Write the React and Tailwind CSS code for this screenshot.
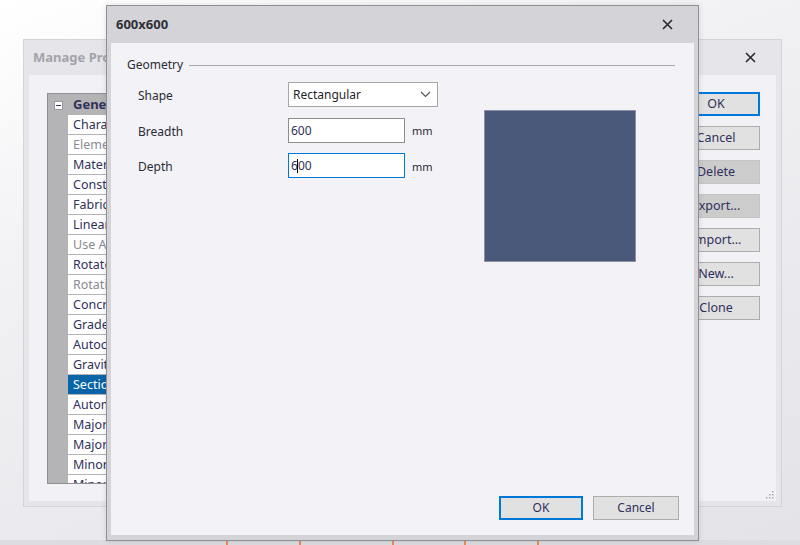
import React from "react";

const treeRows = [
  { t: "Characteristics" },
  { t: "Element Type", g: true },
  { t: "Material" },
  { t: "Construction" },
  { t: "Fabrication" },
  { t: "Linear" },
  { t: "Use Analysis", g: true },
  { t: "Rotate" },
  { t: "Rotation", g: true },
  { t: "Concrete" },
  { t: "Grade" },
  { t: "Autocalc" },
  { t: "Gravity" },
  { t: "Section", sel: true },
  { t: "Automatic" },
  { t: "Major" },
  { t: "Major" },
  { t: "Minor" },
  { t: "Minor" },
];

const sideButtons = [
  { t: "OK", focus: true },
  { t: "Cancel" },
  { t: "Delete", dis: true },
  { t: "Export...", dis: true },
  { t: "Import..." },
  { t: "New..." },
  { t: "Clone" },
];

function CloseX({ className = "" }) {
  return (
    <svg width="11" height="11" viewBox="0 0 11 11" className={className}>
      <path d="M1 1 L10 10 M10 1 L1 10" stroke="#2a2a2a" strokeWidth="1.6" />
    </svg>
  );
}

export default function App() {
  return (
    <div
      className="relative w-[800px] h-[545px] overflow-hidden bg-[linear-gradient(160deg,#ffffff_0%,#f1f1f4_35%,#e3e3e8_100%)] text-[12px] text-[#2b2b33]"
      style={{ fontFamily: '"Noto Sans", "Open Sans", Arial, sans-serif' }}
    >
      {/* bottom strip with ticks */}
      <div className="absolute left-0 right-0 top-[540px] h-[5px] bg-[#dcdce1]">
        <div className="absolute left-[226px] top-0 w-[2px] h-[5px] bg-[#f08a5d]" />
        <div className="absolute left-[299px] top-0 w-[2px] h-[5px] bg-[#f08a5d]" />
        <div className="absolute left-[392px] top-0 w-[2px] h-[5px] bg-[#f08a5d]" />
        <div className="absolute left-[464px] top-0 w-[2px] h-[5px] bg-[#f08a5d]" />
        <div className="absolute left-[537px] top-0 w-[2px] h-[5px] bg-[#f08a5d]" />
      </div>

      {/* background dialog */}
      <div className="absolute left-[23px] top-[39px] w-[759px] h-[468px] bg-[#e6e6ea] border border-[#d3d3d8] flex flex-col">
        <div className="h-[35px] flex items-center justify-between pl-[9px] pr-[25px] shrink-0">
          <span className="font-bold text-[13px] text-[#a3a3ab]">Manage Properties</span>
          <CloseX />
        </div>
        <div className="flex-1 mx-[5px] mb-[5px] bg-[#f2f2f6] flex justify-between pl-[18px] pr-[16px] pt-[17px] relative">
          {/* tree */}
          <div className="w-[300px] h-[391px] mt-[1px] border border-[#8e8e93] bg-[#b4b4b6] overflow-hidden flex flex-col">
            <div className="h-[21px] flex items-center shrink-0 pt-[1px]">
              <div className="w-[20px] flex justify-center">
                <div className="w-[9px] h-[9px] bg-white border border-[#9a9aa0] flex items-center justify-center">
                  <div className="w-[5px] h-[1px] bg-[#3a3a60]" />
                </div>
              </div>
              <span className="font-bold text-[13px] text-[#30305a] pl-[5px]">General</span>
            </div>
            {treeRows.map((r, i) => (
              <div
                key={i}
                className={`ml-[20px] h-[19px] mb-[1px] shrink-0 flex items-center pl-[5px] pt-[2px] text-[12.5px] ${
                  r.sel ? "bg-[#0a64a8] text-white" : r.g ? "bg-white text-[#8a8a92]" : "bg-white text-[#30305a]"
                }`}
              >
                {r.t}
              </div>
            ))}
          </div>
          {/* buttons */}
          <div className="flex flex-col gap-[10px] w-[88px]">
            {sideButtons.map((b, i) => (
              <div
                key={i}
                className={`h-[24px] flex items-center justify-center pt-[1px] text-[12.5px] text-[#30305a] ${
                  b.focus
                    ? "bg-[#e1e1e1] border-2 border-[#0078d7]"
                    : b.dis
                    ? "bg-[#cccccc] border border-[#c4c4c4]"
                    : "bg-[#e1e1e1] border border-[#adadad]"
                }`}
              >
                {b.t}
              </div>
            ))}
          </div>
          {/* resize grip */}
          <svg width="9" height="9" viewBox="0 0 9 9" className="absolute right-[2px] bottom-[2px]">
            <rect x="7" y="1" width="1.5" height="1.5" fill="#a8a8ae" />
            <rect x="4" y="4" width="1.5" height="1.5" fill="#a8a8ae" />
            <rect x="7" y="4" width="1.5" height="1.5" fill="#a8a8ae" />
            <rect x="1" y="7" width="1.5" height="1.5" fill="#a8a8ae" />
            <rect x="4" y="7" width="1.5" height="1.5" fill="#a8a8ae" />
            <rect x="7" y="7" width="1.5" height="1.5" fill="#a8a8ae" />
          </svg>
        </div>
      </div>

      {/* front dialog */}
      <div className="absolute left-[106px] top-[5px] w-[593px] h-[536px] bg-[#d3d3d8] border border-[#8f8f96] flex flex-col shadow-[0_0_6px_rgba(0,0,0,0.12)]">
        <div className="h-[37px] shrink-0 flex items-center justify-between pl-[9px] pr-[25px]">
          <span className="font-bold text-[13px] text-[#2f2f38]">600x600</span>
          <CloseX />
        </div>
        <div className="flex-1 mx-[4px] mb-[5px] bg-[#f2f2f7] flex flex-col pt-[14px] pl-[16px] pr-[15px] pb-[15px]">
          {/* group header */}
          <div className="flex items-center h-[16px]">
            <span className="text-[12px] text-[#2b2b33]">Geometry</span>
            <div className="flex-1 h-[1px] bg-[#a8a8ae] ml-[6px] mr-[4px]" />
          </div>
          <div className="flex pl-[11px] mt-[9px]">
            <div className="w-[346px] flex flex-col">
              <div className="flex items-center h-[25px]">
                <span className="w-[150px] pt-[3px]">Shape</span>
                <div className="w-[150px] h-[25px] bg-white border border-[#a6a6a6] flex items-center justify-between pl-[4px] pr-[6px]">
                  <span className="text-[#1f1f2a]">Rectangular</span>
                  <svg width="11" height="7" viewBox="0 0 11 7">
                    <path d="M1 1 L5.5 5.5 L10 1" stroke="#555" strokeWidth="1.2" fill="none" />
                  </svg>
                </div>
              </div>
              <div className="flex items-center h-[25px] mt-[11px]">
                <span className="w-[150px] pt-[2px]">Breadth</span>
                <div className="w-[117px] h-[25px] bg-white border border-[#8e8e8e] flex items-center pl-[2px] text-[#30305a]">
                  600
                </div>
                <span className="ml-[7px] text-[11px] pt-[2px]">mm</span>
              </div>
              <div className="flex items-center h-[25px] mt-[10px]">
                <span className="w-[150px] pt-[3px]">Depth</span>
                <div className="w-[117px] h-[25px] bg-white border border-[#0078d7] flex items-center pl-[2px] text-[#30305a]">
                  <span>6</span>
                  <span className="w-[1px] h-[14px] bg-black mx-[-0.5px]" />
                  <span>00</span>
                </div>
                <span className="ml-[7px] text-[11px] pt-[3px]">mm</span>
              </div>
            </div>
            <div className="w-[152px] h-[152px] mt-[28px] bg-[#4a5879] border border-[#8c93a8]" />
          </div>
          <div className="flex-1" />
          <div className="flex justify-end gap-[10px]">
            <div className="w-[84px] h-[24px] bg-[#e1e1e1] border-2 border-[#0078d7] flex items-center justify-center text-[#30305a]">
              OK
            </div>
            <div className="w-[86px] h-[24px] bg-[#e1e1e1] border border-[#adadad] flex items-center justify-center text-[#30305a]">
              Cancel
            </div>
          </div>
        </div>
      </div>
    </div>
  );
}
